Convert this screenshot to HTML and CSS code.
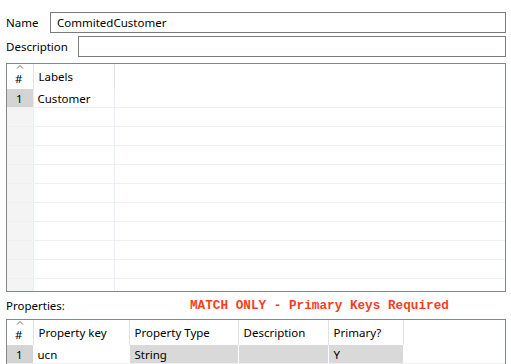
FILE: index.html
```html
<!DOCTYPE html>
<html lang="en">
<head>
  <meta charset="UTF-8">
  <title>Node Label Editor</title>
  <link rel="stylesheet" href="styles.css">
</head>
<body>
  <div class="editor">
    <div class="field">
      <label class="field-label name-label" for="name">Name</label>
      <input class="field-input" type="text" id="name" value="CommitedCustomer">
    </div>
    <div class="field">
      <label class="field-label desc-label" for="description">Description</label>
      <input class="field-input" type="text" id="description" value="">
    </div>

    <div class="grid labels-grid">
      <table>
        <colgroup>
          <col class="c-num">
          <col class="c-label">
          <col>
        </colgroup>
        <thead>
          <tr>
            <th class="num-head"><svg class="sort" width="8" height="5" viewBox="0 0 8 5"><polyline points="1,4.5 4,1.5 7,4.5" fill="none" stroke="#6d6d6d" stroke-width="1"/></svg>#</th>
            <th>Labels</th>
            <th class="filler"></th>
          </tr>
        </thead>
        <tbody>
          <tr class="current">
            <td class="num">1</td>
            <td class="first">Customer</td>
            <td class="filler"></td>
          </tr>
          <tr><td class="num"></td><td></td><td class="filler"></td></tr>
          <tr><td class="num"></td><td></td><td class="filler"></td></tr>
          <tr><td class="num"></td><td></td><td class="filler"></td></tr>
          <tr><td class="num"></td><td></td><td class="filler"></td></tr>
          <tr><td class="num"></td><td></td><td class="filler"></td></tr>
          <tr><td class="num"></td><td></td><td class="filler"></td></tr>
          <tr><td class="num"></td><td></td><td class="filler"></td></tr>
          <tr><td class="num"></td><td></td><td class="filler"></td></tr>
          <tr><td class="num"></td><td></td><td class="filler"></td></tr>
          <tr><td class="num"></td><td></td><td class="filler"></td></tr>
          <tr><td class="num"></td><td></td><td class="filler"></td></tr>
        </tbody>
      </table>
    </div>

    <div class="props-bar">
      <span class="props-title">Properties:</span>
      <span class="warning">MATCH ONLY - Primary Keys Required</span>
    </div>

    <div class="grid props-grid">
      <table>
        <colgroup>
          <col class="c-num">
          <col class="c-key">
          <col class="c-type">
          <col class="c-desc">
          <col class="c-primary">
          <col>
        </colgroup>
        <thead>
          <tr>
            <th class="num-head"><svg class="sort" width="8" height="5" viewBox="0 0 8 5"><polyline points="1,4.5 4,1.5 7,4.5" fill="none" stroke="#6d6d6d" stroke-width="1"/></svg>#</th>
            <th>Property key</th>
            <th>Property Type</th>
            <th>Description</th>
            <th>Primary?</th>
            <th class="filler"></th>
          </tr>
        </thead>
        <tbody>
          <tr class="selected">
            <td class="num">1</td>
            <td class="first editing">ucn</td>
            <td>String</td>
            <td></td>
            <td>Y</td>
            <td class="filler"></td>
          </tr>
          <tr><td class="num"></td><td></td><td></td><td></td><td></td><td class="filler"></td></tr>
        </tbody>
      </table>
    </div>
  </div>
</body>
</html>
```

FILE: styles.css
```css
body {
  margin: 0;
  background-color: #fff;
  font-family: "Noto Sans", "Open Sans", sans-serif;
  font-size: 11.5px;
  color: #000;
  overflow: hidden;
}
.editor {
  padding: 12px 5px 0 6px;
}
.field {
  display: flex;
  align-items: center;
  height: 21px;
  margin-bottom: 3px;
}
.field-label {
  flex: none;
}
.name-label {
  width: 44px;
}
.desc-label {
  width: 72px;
}
.field-input {
  flex: 1;
  box-sizing: border-box;
  height: 21px;
  margin: 0;
  padding: 0 6px;
  border: 1px solid #7a7a7a;
  font-family: inherit;
  font-size: 11.5px;
  color: #000;
  outline: none;
}
.grid {
  border: 1px solid #828790;
  overflow: hidden;
  box-sizing: border-box;
}
.labels-grid {
  margin-top: 6px;
  height: 229px;
}
.props-grid {
  height: 60px;
}
table {
  width: 100%;
  border-collapse: collapse;
  table-layout: fixed;
}
.c-num { width: 26px; }
.c-label { width: 81px; }
.c-key { width: 96px; }
.c-type { width: 109px; }
.c-desc { width: 90px; }
.c-primary { width: 75px; }
th {
  height: 25px;
  padding: 0 0 0 5px;
  font-weight: normal;
  text-align: left;
  border-right: 1px solid #e2e2e2;
  white-space: nowrap;
  overflow: hidden;
}
th.num-head {
  position: relative;
  padding: 4px 0 0 8px;
  box-sizing: border-box;
}
.sort {
  position: absolute;
  top: 0;
  left: 9px;
}
td {
  height: 18px;
  padding: 0 0 0 5px;
  border-right: 1px solid #e5edf8;
  border-bottom: 1px solid #efefef;
  white-space: nowrap;
  overflow: hidden;
}
td.first {
  padding-left: 4px;
}
td.num {
  padding-left: 9px;
  background-color: #f4f4f4;
}
th.filler, td.filler {
  border-right: none;
}
tr.current td.num {
  background-color: #d4d4d4;
}
tr.selected td {
  background-color: #d9d9d9;
  border-right-color: #fff;
}
tr.selected td.num {
  background-color: #d4d4d4;
}
tr.selected td.editing {
  background-color: #fff;
}
tr.selected td.filler {
  background-color: #fff;
}
.props-bar {
  display: flex;
  align-items: center;
  height: 27px;
}
.props-title {
  width: 184px;
}
.warning {
  font-family: "Liberation Mono", "Courier New", monospace;
  font-weight: bold;
  font-size: 12.7px;
  color: #f43e1e;
}
```
